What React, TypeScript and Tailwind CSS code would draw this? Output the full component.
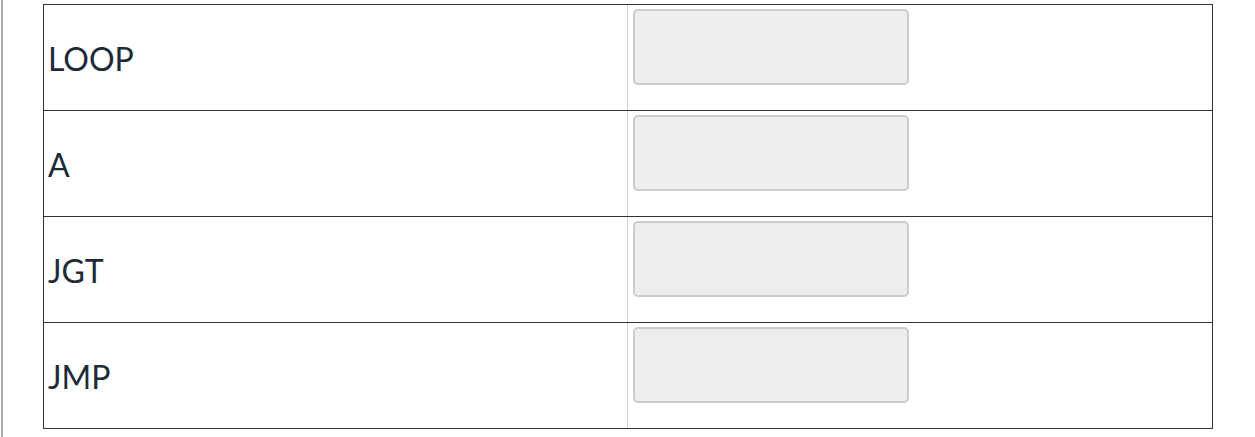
const rows = ["LOOP", "A", "JGT", "JMP"];

export default function App() {
  return (
    <div className="w-[1255px] h-[437px] bg-white flex overflow-hidden">
      {/* left rail */}
      <div className="ml-px w-[2px] h-full bg-[#aaaaaa]" />
      <div className="ml-[40px] mt-[4px]">
        <div className="w-[1170px] border-x border-b border-[#333333]">
          {rows.map((label) => (
            <div key={label} className="flex h-[106px] border-t border-[#333333]">
              <div
                className="w-[583px] pl-[4px] pt-[2px] flex items-center text-[32px] text-[#1d2b38]"
                style={{ fontFamily: "Lato, 'Noto Sans', sans-serif" }}
              >
                {label}
              </div>
              <div className="flex-1 border-l border-[#cfcfcf] pl-[5px] pt-[4px]">
                <div className="w-[276px] h-[76px] rounded-[5px] border-2 border-[#cccccc] bg-[#ededed]" />
              </div>
            </div>
          ))}
        </div>
      </div>
    </div>
  );
}
